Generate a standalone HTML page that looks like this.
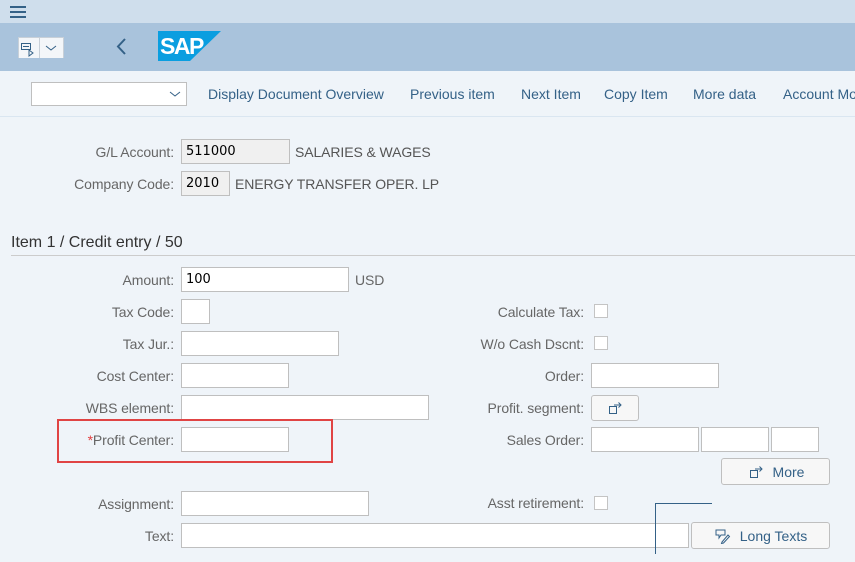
<!DOCTYPE html>
<html><head><style>
*{box-sizing:border-box;margin:0;padding:0}
body{width:855px;height:562px;overflow:hidden;background:#eff4f9;font-family:"Liberation Sans",Arial,sans-serif;font-size:14px;color:#666;position:relative}
.a{position:absolute}
.lbl{position:absolute;text-align:right;white-space:nowrap;margin-top:-1px;letter-spacing:-0.1px}
.in{position:absolute;background:#fff;border:1px solid #bfbfbf;height:25px;color:#000;padding:4px 4px;font-family:"DejaVu Sans",sans-serif;font-size:13px}
.ro{background:#f0f0f0}
.cb{position:absolute;width:14px;height:14px;background:#fff;border:1px solid #c4c4c4}
.btn{position:absolute;background:#f7f7f7;border:1px solid #bfbfbf;border-radius:3px;color:#346187;font-size:14px;display:flex;align-items:center;justify-content:center;gap:8px}
.tb{position:absolute;top:86px;color:#346187;font-size:14px;white-space:nowrap}
</style></head><body>
<div class="a" style="left:0;top:0;width:855px;height:23px;background:#cfdeec"></div>
<div class="a" style="left:10px;top:6px;width:16px;height:2px;background:#346187;box-shadow:0 5px 0 #346187,0 10px 0 #346187"></div>
<div class="a" style="left:0;top:23px;width:855px;height:48px;background:#a9c3dc"></div>
<div class="a" style="left:18px;top:37px;width:46px;height:21px;background:#f3f6f9;border:1px solid #c8d0d8;border-bottom:none"></div>
<div class="a" style="left:39px;top:37px;width:1px;height:21px;background:#c8d0d8"></div>
<svg class="a" style="left:20px;top:40px" width="18" height="18"><rect x="1.5" y="3.5" width="9" height="6" fill="none" stroke="#346187"/><line x1="3" y1="6.5" x2="9" y2="6.5" stroke="#346187"/><path d="M9 10 L13 13 L9 16Z" fill="none" stroke="#346187"/></svg>
<svg class="a" style="left:44px;top:43px" width="14" height="10"><path d="M2 3 L7 7 L12 3" fill="none" stroke="#346187"/></svg>
<svg class="a" style="left:114px;top:37px" width="14" height="20"><path d="M11 2 L4 9.5 L11 17" fill="none" stroke="#346187" stroke-width="2"/></svg>
<svg class="a" style="left:158px;top:31px" width="63" height="30"><polygon points="0,0 63,0 32,30 0,30" fill="#0a9ee0"/><text x="2" y="23" font-family="Liberation Sans" font-weight="bold" font-size="23" fill="#fff" letter-spacing="-1.5">SAP</text></svg>
<div class="a" style="left:0;top:71px;width:855px;height:46px;background:#eff4f9;border-bottom:1px solid #dae6f1"></div>
<div class="a" style="left:31px;top:82px;width:156px;height:24px;background:#fff;border:1px solid #bfbfbf"></div>
<svg class="a" style="left:168px;top:89px" width="14" height="10"><path d="M2 3 L7 7 L12 3" fill="none" stroke="#346187"/></svg>
<div class="tb" style="left:208px">Display Document Overview</div>
<div class="tb" style="left:410px">Previous item</div>
<div class="tb" style="left:521px">Next Item</div>
<div class="tb" style="left:604px">Copy Item</div>
<div class="tb" style="left:693px">More data</div>
<div class="tb" style="left:783px">Account Mo</div>

<div class="lbl" style="right:681px;top:145px">G/L Account:</div>
<div class="in ro" style="left:181px;top:139px;width:109px">511000</div>
<div class="lbl" style="left:295px;top:145px;color:#555">SALARIES &amp; WAGES</div>
<div class="lbl" style="right:681px;top:177px">Company Code:</div>
<div class="in ro" style="left:181px;top:171px;width:49px">2010</div>
<div class="lbl" style="left:235px;top:177px;color:#555">ENERGY TRANSFER OPER. LP</div>

<div class="a" style="left:11px;top:234px;font-size:16px;color:#333">Item 1 / Credit entry / 50</div>
<div class="a" style="left:11px;top:255px;width:844px;height:1px;background:#ccc"></div>

<div class="lbl" style="right:681px;top:273px">Amount:</div>
<div class="in" style="left:181px;top:267px;width:168px">100</div>
<div class="lbl" style="left:355px;top:273px">USD</div>
<div class="lbl" style="right:681px;top:305px">Tax Code:</div>
<div class="in" style="left:181px;top:299px;width:29px"></div>
<div class="lbl" style="right:681px;top:337px">Tax Jur.:</div>
<div class="in" style="left:181px;top:331px;width:158px"></div>
<div class="lbl" style="right:681px;top:369px">Cost Center:</div>
<div class="in" style="left:181px;top:363px;width:108px"></div>
<div class="lbl" style="right:681px;top:401px">WBS element:</div>
<div class="in" style="left:181px;top:395px;width:248px"></div>
<div class="lbl" style="right:681px;top:433px"><span style="color:#e34040">*</span>Profit Center:</div>
<div class="in" style="left:181px;top:427px;width:108px"></div>
<div class="a" style="left:57px;top:419px;width:276px;height:44px;border:2px solid #e04444"></div>
<div class="lbl" style="right:681px;top:497px">Assignment:</div>
<div class="in" style="left:181px;top:491px;width:188px"></div>
<div class="lbl" style="right:681px;top:529px">Text:</div>
<div class="in" style="left:181px;top:523px;width:508px"></div>

<div class="lbl" style="right:271px;top:305px">Calculate Tax:</div>
<div class="cb" style="left:594px;top:304px"></div>
<div class="lbl" style="right:271px;top:337px">W/o Cash Dscnt:</div>
<div class="cb" style="left:594px;top:336px"></div>
<div class="lbl" style="right:271px;top:369px">Order:</div>
<div class="in" style="left:591px;top:363px;width:128px"></div>
<div class="lbl" style="right:271px;top:401px">Profit. segment:</div>
<div class="btn" style="left:591px;top:395px;width:48px;height:26px"><svg width="18" height="16"><rect x="3.5" y="6.5" width="7" height="7" fill="none" stroke="#346187"/><path d="M8 5 L15 5 M12.5 2.5 L15 5 L12.5 7.5" fill="none" stroke="#346187"/></svg></div>
<div class="lbl" style="right:271px;top:433px">Sales Order:</div>
<div class="in" style="left:591px;top:427px;width:108px"></div>
<div class="in" style="left:701px;top:427px;width:68px"></div>
<div class="in" style="left:771px;top:427px;width:48px"></div>
<div class="btn" style="left:721px;top:458px;width:109px;height:27px"><svg width="18" height="16"><rect x="3.5" y="6.5" width="7" height="7" fill="none" stroke="#346187"/><path d="M8 5 L15 5 M12.5 2.5 L15 5 L12.5 7.5" fill="none" stroke="#346187"/></svg>More</div>
<div class="lbl" style="right:271px;top:496px">Asst retirement:</div>
<div class="cb" style="left:594px;top:496px"></div>
<div class="btn" style="left:691px;top:522px;width:139px;height:27px"><svg width="18" height="16"><path d="M2 2 H11 V7 H7 L5 10 V7 H2Z" fill="none" stroke="#346187"/><path d="M8 14 L14 7 L15.5 8.5 L9.5 15 L7.5 15.5Z" fill="none" stroke="#346187"/></svg>Long Texts</div>
<div class="a" style="left:655px;top:503px;width:1px;height:51px;background:#346187"></div>
<div class="a" style="left:655px;top:503px;width:57px;height:1px;background:#346187"></div>
</body></html>
